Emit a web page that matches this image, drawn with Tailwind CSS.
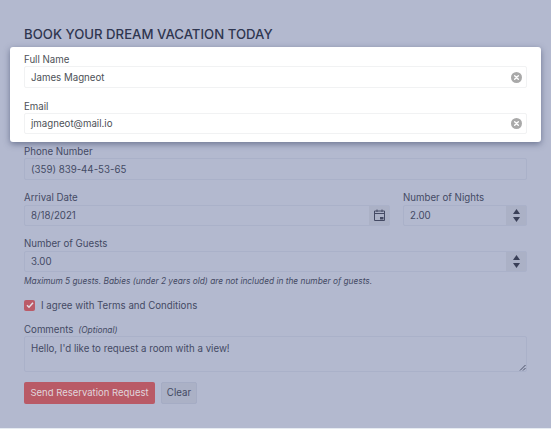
<!DOCTYPE html>
<html lang="en">
<head>
<title>Book your dream vacation</title>
<meta name="viewport" content="width=device-width, initial-scale=1" />
<script src="https://cdn.jsdelivr.net/npm/@tailwindcss/browser@4"></script>
</head>

<body class="bg-[#b3b9cf] font-['Inter','Liberation_Sans',sans-serif] text-[#444a64] text-[9.7px] leading-none overflow-hidden">
<main class="w-[551px] h-[429px] pt-[27px] px-6">
  <h1 class="text-[13.2px] leading-[14px] h-[20px] font-medium text-[#2f3650]">BOOK YOUR DREAM VACATION TODAY</h1>

  <section class="relative -mx-[14px] px-[14px] h-[95px] bg-white rounded-[3px] shadow-[0_2px_6px_rgba(50,60,95,0.55)] text-[#4d5157]">
    <label class="block pt-[7px] h-[19.25px] leading-[12px]">Full Name</label>
    <div class="flex items-center justify-between h-[21.5px] pl-[6px] pr-[4px] border border-[#f1f2f3] rounded-[2px]">
      <span class="pt-px">James Magneot</span>
      <svg class="w-[11px] h-[11px]" viewBox="0 0 12 12"><circle cx="6" cy="6" r="6" fill="#a9a9a9"/><path d="M4 4l4 4M8 4l-4 4" stroke="#fff" stroke-width="1.5" stroke-linecap="round"/></svg>
    </div>
    <label class="block pt-[12.750px] h-[24.75px] leading-[12px]">Email</label>
    <div class="flex items-center justify-between h-[21.5px] pl-[6px] pr-[4px] border border-[#f1f2f3] rounded-[2px]">
      <span class="pt-px">jmagneot@mail.io</span>
      <svg class="w-[11px] h-[11px]" viewBox="0 0 12 12"><circle cx="6" cy="6" r="6" fill="#a9a9a9"/><path d="M4 4l4 4M8 4l-4 4" stroke="#fff" stroke-width="1.5" stroke-linecap="round"/></svg>
    </div>
  </section>

  <label class="block h-[16.25px] leading-[12px] pt-[4px]">Phone Number</label>
  <div class="flex items-center h-[21.5px] pl-[6px] pt-px border border-[#aab1c9] rounded-[2px]">(359) 839-44-53-65</div>

  <div class="flex gap-[13px] mt-[10.75px]">
    <div class="w-[366px]">
      <label class="block h-[14px] leading-[12px] pt-px">Arrival Date</label>
      <div class="flex items-center justify-between h-[21.5px] pl-[6px] border border-[#aab1c9] rounded-[2px]">
        <span class="pt-px">8/18/2021</span>
        <span class="flex items-center justify-center w-[20px] h-full bg-[#abb1c6]">
          <svg class="w-[11px] h-[12px]" viewBox="0 0 11 12" fill="none" stroke="#444a64"><path d="M.5 2h10v9.500H.5zM.5 4.500h10M3 .5v2.500M8 .5v2.500"/><path d="M6 8h3.500v2.500H6z" fill="#444a64" stroke="none"/></svg>
        </span>
      </div>
    </div>
    <div class="w-[124px]">
      <label class="block h-[14px] leading-[12px] pt-px">Number of Nights</label>
      <div class="flex items-center justify-between h-[21.5px] pl-[6px] border border-[#aab1c9] rounded-[2px]">
        <span class="pt-px">2.00</span>
        <span class="flex flex-col items-center justify-center gap-[3px] w-[20px] h-full bg-[#abb1c6]">
          <svg class="w-[7px] h-[5px]" viewBox="0 0 7 5"><path d="M3.500 0L7 5H0z" fill="#3a4058"/></svg>
          <svg class="w-[7px] h-[5px]" viewBox="0 0 7 5"><path d="M0 0h7L3.500 5z" fill="#3a4058"/></svg>
        </span>
      </div>
    </div>
  </div>

  <label class="block mt-[10.75px] h-[14px] leading-[12px] pt-px">Number of Guests</label>
  <div class="flex items-center justify-between h-[21.5px] pl-[6px] border border-[#aab1c9] rounded-[2px]">
    <span class="pt-px">3.00</span>
    <span class="flex flex-col items-center justify-center gap-[3px] w-[20px] h-full bg-[#abb1c6]">
      <svg class="w-[7px] h-[5px]" viewBox="0 0 7 5"><path d="M3.500 0L7 5H0z" fill="#3a4058"/></svg>
      <svg class="w-[7px] h-[5px]" viewBox="0 0 7 5"><path d="M0 0h7L3.500 5z" fill="#3a4058"/></svg>
    </span>
  </div>
  <p class="mt-[3px] h-[12px] text-[8.33px] leading-[12px] italic">Maximum 5 guests. Babies (under 2 years old) are not included in the number of guests.</p>

  <div class="flex items-center gap-[6px] mt-[12.5px] h-[11px]">
    <span class="flex items-center justify-center w-[11px] h-[11px] rounded-[2px] bg-[#bb5b68]">
      <svg class="w-[8px] h-[8px]" viewBox="0 0 8 8" fill="none" stroke="#e4dfe6" stroke-width="1.500"><path d="M1 4.200l2 2 4-4.400"/></svg>
    </span>
    <span class="pt-px">I agree with Terms and Conditions</span>
  </div>

  <div class="mt-[13px] h-[12px] leading-[12px]">Comments <em class="ml-[2px] text-[8.33px]">(Optional)</em></div>
  <div class="relative h-[35.75px] pl-[6px] pt-[5px] leading-[13px] border border-[#aab1c9] rounded-[2px]">
    Hello, I'd like to request a room with a view!
    <svg class="absolute right-[0px] bottom-[0px] w-[7px] h-[7px]" viewBox="0 0 7 7" stroke="#4a5068" fill="none"><path d="M1 6.500L6.500 1M4 6.500L6.500 4"/></svg>
  </div>

  <div class="flex gap-[6px] mt-[10.5px]">
    <button class="w-[131px] h-[21.5px] rounded-[2px] bg-[#b95a66] text-[#e0d5dc] text-[9.5px] whitespace-nowrap">Send Reservation Request</button>
    <button class="w-[36px] h-[21.5px] rounded-[2px] bg-[#abb1c6] border border-[#a5acc4] text-[9.7px]">Clear</button>
  </div>
</main>
<div class="fixed left-0 right-0 bottom-0 h-px bg-[#e6ebf2]"></div>
</body>
</html>
